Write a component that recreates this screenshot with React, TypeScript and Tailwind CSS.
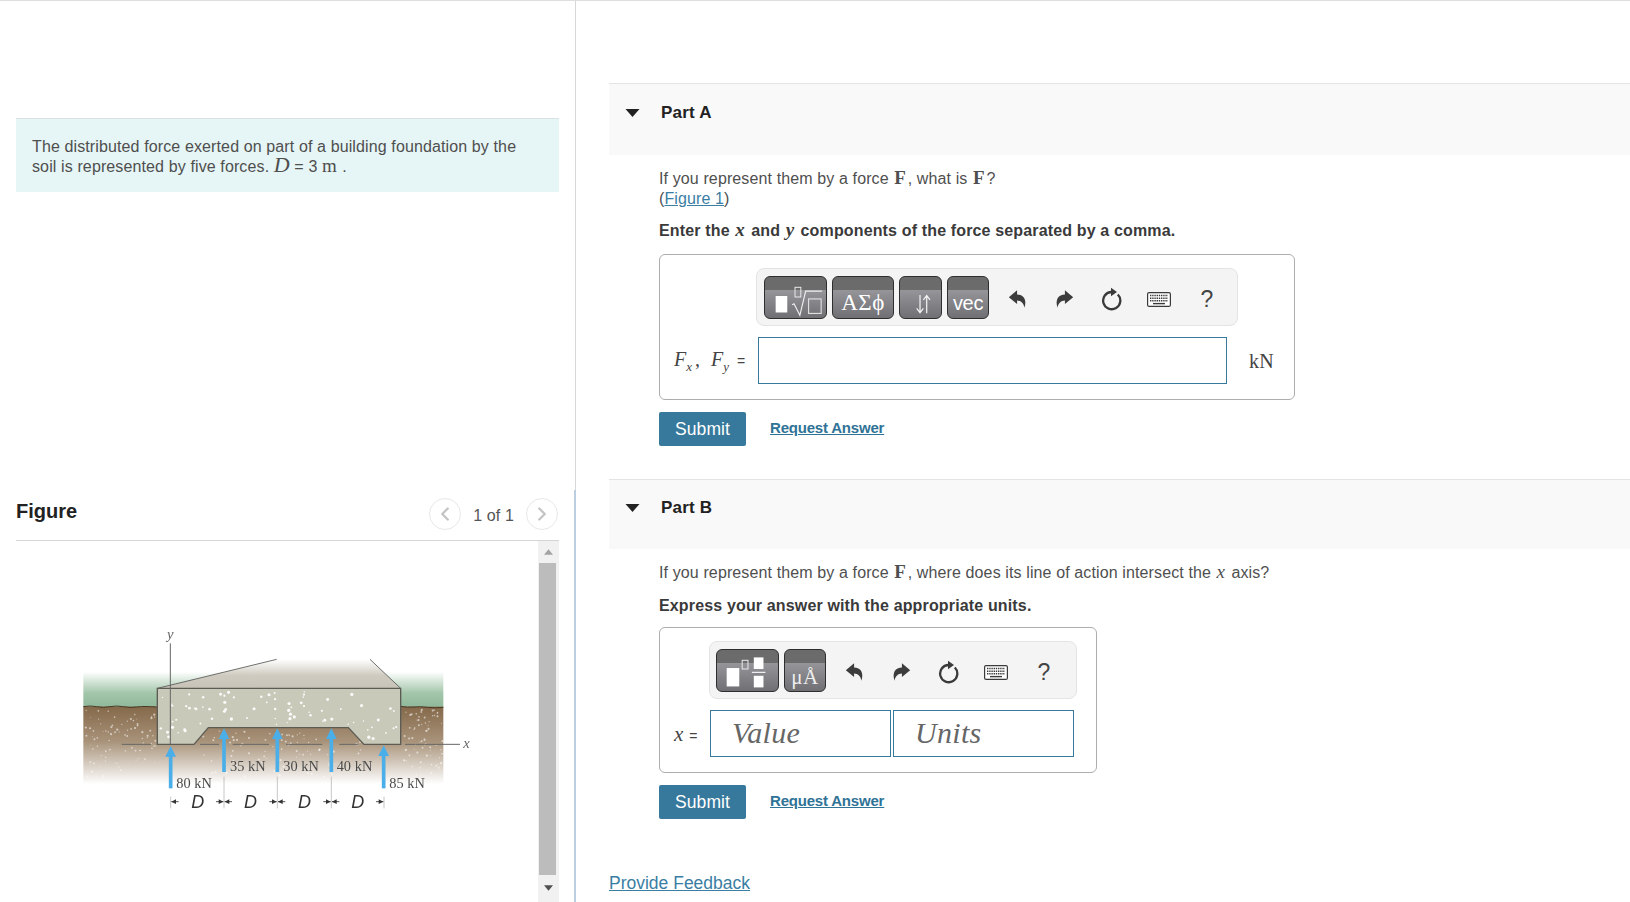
import React from "react";
import { ChevronLeft, ChevronRight } from "lucide-react";

const serif = "font-['Liberation_Serif',serif]";

// speckles for the concrete and the soil in the figure
const speck = (n: number, x0: number, x1: number, y0: number, y1: number, seed: number) =>
  Array.from({ length: n }, (_, i) => {
    const a = Math.sin(i * 12.9898 + seed) * 43758.5453;
    const b = Math.sin(i * 78.233 + seed) * 12543.123;
    const c = Math.sin(i * 37.719 + seed) * 9631.77;
    return {
      x: x0 + (a - Math.floor(a)) * (x1 - x0),
      y: y0 + (b - Math.floor(b)) * (y1 - y0),
      r: 2 + (c - Math.floor(c)) * 3,
    };
  });

const concrete = [
  ...speck(62, 272, 985, 215, 315, 1),
  ...speck(8, 272, 370, 318, 365, 2),
  ...speck(7, 885, 985, 318, 365, 3),
];
const soil = [
  ...speck(80, 45, 258, 270, 470, 4),
  ...speck(70, 1000, 1118, 270, 470, 5),
  ...speck(90, 390, 880, 332, 470, 6),
];

const Arrow = ({ x, tip, end }: { x: number; tip: number; end: number }) => (
  <g fill="#4aaee9">
    <rect x={x - 5.5} y={tip + 20} width={11} height={end - tip - 20} />
    <polygon points={`${x},${tip} ${x + 16},${tip + 32} ${x - 16},${tip + 32}`} />
  </g>
);

const Foundation = () => (
  <svg viewBox="0 0 1260 600" className="w-[420px] h-[200px] blur-[0.7px]">
    <defs>
      <linearGradient id="grass" x1="0" y1="0" x2="0" y2="1">
        <stop offset="0" stopColor="#ffffff" />
        <stop offset="0.6" stopColor="#a3c6aa" />
        <stop offset="1" stopColor="#8fb89a" />
      </linearGradient>
      <linearGradient id="dirt" x1="0" y1="0" x2="0" y2="1">
        <stop offset="0" stopColor="#85694a" />
        <stop offset="0.45" stopColor="#a8937a" />
        <stop offset="1" stopColor="#ffffff" />
      </linearGradient>
      <linearGradient id="slab" x1="0" y1="0" x2="0" y2="1">
        <stop offset="0" stopColor="#ffffff" />
        <stop offset="0.55" stopColor="#cfcbc0" />
        <stop offset="1" stopColor="#c7c3b7" />
      </linearGradient>
    </defs>
    <rect x="40" y="155" width="1080" height="107" fill="url(#grass)" />
    <rect x="40" y="260" width="1080" height="232" fill="url(#dirt)" />
    {soil.map((d, i) => (
      <circle key={i} cx={d.x} cy={d.y} r={d.r * 0.7} fill="#fff" opacity="0.55" />
    ))}
    <path
      d="M40 260 q20 -4 40 0 t40 0 t40 0 t40 1 t60 0 M992 259 q20 4 40 2 t40 1 t48 0"
      fill="none"
      stroke="#4a3a28"
      strokeWidth="3"
    />
    <polygon points="262,205 620,118 900,118 992,205" fill="url(#slab)" />
    <path d="M262 205 L620 118 M900 118 L992 205" stroke="#555" strokeWidth="2.5" fill="none" />
    <polygon
      points="262,205 992,205 992,373 882,373 835,323 415,323 372,373 262,373"
      fill="#c9c9ba"
      stroke="#5c5c54"
      strokeWidth="4"
    />
    {concrete.map((d, i) => (
      <circle key={i} cx={d.x} cy={d.y} r={d.r} fill="#fff" opacity="0.9" />
    ))}
    <path
      d="M155 373H243M390 373H447M488 373H597M648 373H757M808 373H865M1005 373H1170"
      stroke="#666"
      strokeWidth="3"
    />
    <line x1="301" y1="70" x2="301" y2="373" stroke="#666" strokeWidth="3" />
    <g fill="#666" fontFamily="Liberation Serif, serif" fontStyle="italic" fontSize="44">
      <text x="291" y="58">y</text>
      <text x="1180" y="385">x</text>
    </g>
    <path
      d="M462 470V565M622 470V565M784 470V565M302 530V565M942 530V565"
      stroke="#aaa"
      strokeWidth="2"
    />
    <Arrow x={302} tip={378} end={505} />
    <Arrow x={462} tip={325} end={456} />
    <Arrow x={622} tip={325} end={456} />
    <Arrow x={784} tip={325} end={456} />
    <Arrow x={941} tip={376} end={505} />
    <g fill="#4a4a4a" fontFamily="Liberation Serif, serif" fontSize="43">
      <text x="480" y="454">35 kN</text>
      <text x="640" y="454">30 kN</text>
      <text x="800" y="454">40 kN</text>
      <text x="319" y="504">80 kN</text>
      <text x="958" y="503">85 kN</text>
    </g>
    <path
      d="M304 545H326M438 545H460M464 545H486M598 545H620M624 545H646M760 545H782M786 545H808M918 545H940"
      stroke="#333"
      strokeWidth="2.5"
    />
    <g fill="#333">
      <polygon points="304,545 318,538 318,552" />
      <polygon points="460,545 446,538 446,552" />
      <polygon points="464,545 478,538 478,552" />
      <polygon points="620,545 606,538 606,552" />
      <polygon points="624,545 638,538 638,552" />
      <polygon points="782,545 768,538 768,552" />
      <polygon points="786,545 800,538 800,552" />
      <polygon points="940,545 926,538 926,552" />
    </g>
    <g fill="#333" fontFamily="Liberation Sans, sans-serif" fontStyle="italic" fontSize="54">
      <text x="364" y="565">D</text>
      <text x="522" y="565">D</text>
      <text x="684" y="565">D</text>
      <text x="844" y="565">D</text>
    </g>
  </svg>
);

const ToolBtn = ({ w, children }: { w: string; children: React.ReactNode }) => (
  <div
    className={`${w} h-[43px] rounded-[6px] border border-[#2e2e2e] bg-[linear-gradient(#6b6b6b_0,#6b6b6b_31%,#95959a_31%,#6f6f74_100%)] text-white flex items-end justify-center overflow-hidden`}
  >
    {children}
  </div>
);

const Undo = ({ flip }: { flip?: boolean }) => (
  <svg viewBox="0 0 24 24" className={`w-[22px] h-[22px] ${flip ? "-scale-x-100" : ""}`}>
    <path
      d="M2 10 L11 2.5 V7 C18 7 22 12.5 19 21.5 C18.5 16.5 15 13.5 11 13.5 V17.5 Z"
      fill="#3c3c3c"
    />
  </svg>
);

const Reset = () => (
  <svg viewBox="0 0 24 24" className="w-[24px] h-[24px] translate-x-[1px]">
    <path d="M17.8 7.5 A8.6 8.6 0 1 1 11.5 5" fill="none" stroke="#3a3a3a" strokeWidth="2.3" />
    <polygon points="11,0.8 17,5 11,9.2" fill="#3a3a3a" />
  </svg>
);

const Keyboard = () => (
  <svg viewBox="0 0 24 15" className="w-[24px] h-[15px]">
    <rect x="0.6" y="0.6" width="22.8" height="13.8" rx="1.5" fill="#fff" stroke="#3a3a3a" strokeWidth="1.2" />
    <path d="M3 3.6H21M3 6.2H21M3 8.8H21" stroke="#3a3a3a" strokeWidth="1.5" strokeDasharray="1.4 0.8" />
    <path d="M6 11.6H18" stroke="#3a3a3a" strokeWidth="1.4" />
  </svg>
);

const ToolIcons = () => (
  <div className="flex items-center gap-[24px] pt-[4px]">
    <Undo />
    <Undo flip />
    <Reset />
    <Keyboard />
    <span className="w-[24px] text-center text-[23px] leading-none text-[#444]">?</span>
  </div>
);

const Actions = () => (
  <div className="flex items-center">
    <button className="w-[87px] h-[34px] rounded-[2px] bg-[#37799c] text-white text-[17.5px] tracking-[0.1px]">
      Submit
    </button>
    <a className="ml-[24px] mb-[2px] text-[15px] font-bold text-[#2f7396] underline tracking-[-0.2px]">
      Request Answer
    </a>
  </div>
);

const PartHeader = ({ title, h, pt }: { title: string; h: string; pt: string }) => (
  <div className={`${h} ${pt} bg-[#f9f9f9] flex items-start pl-[16px] border-t border-[#e4e4e4]`}>
    <svg viewBox="0 0 14 8" className="w-[15px] h-[8px] mt-[6px]">
      <polygon points="0,0 14,0 7,8" fill="#222" />
    </svg>
    <h3 className="ml-[21px] text-[17px] leading-[20px] font-bold text-[#222] tracking-[0.2px]">{title}</h3>
  </div>
);

const M = ({ children, b }: { children: React.ReactNode; b?: boolean }) => (
  <span className={`${serif} text-[19px] leading-[0] mx-[1px] tracking-[0.8px] ${b ? "font-bold" : "italic"}`}>{children}</span>
);

export default function App() {
  return (
    <div className="w-[1630px] h-[902px] overflow-hidden flex bg-white border-t border-[#dedede] font-['Liberation_Sans',Arial,sans-serif] text-[16px] leading-[20px] tracking-[0.12px] text-[#4f4f4f]">
      {/* left column */}
      <aside className="w-[576px] shrink-0">
        <div className="h-[489px] border-r border-[#d8d8d8] px-[16px] pt-[117px]">
          <div className="h-[74px] bg-[#e6f5f5] border-t border-[#d9e2e2] pl-[16px] pt-[18px]">
            The distributed force exerted on part of a building foundation by the
            <br />
            soil is represented by five forces. <span className={`${serif} italic text-[22px] leading-[0]`}>D</span> = 3{" "}
            <span className={`${serif} text-[19px] leading-[0] tracking-[1px]`}>m</span> .
          </div>
        </div>
        <div className="h-[412px] border-r-2 border-[#bccfe0] pl-[16px] pr-[15px] pt-[2px]">
          <div className="h-[49px] border-b border-[#d5d5d5] flex items-start">
            <h2 className="text-[20px] leading-[24px] font-bold text-[#222] mt-[7px] tracking-normal">Figure</h2>
            <div className="ml-auto flex items-center mt-[6px] pr-[1px]">
              <span className="w-[32px] h-[32px] rounded-full border border-[#e8e8e8] flex items-center justify-center text-[#c4c4c4]">
                <ChevronLeft size={22} strokeWidth={2.5} />
              </span>
              <span className="mx-[12px] text-[#555] mt-[3px]">1 of 1</span>
              <span className="w-[32px] h-[32px] rounded-full border border-[#e8e8e8] flex items-center justify-center text-[#c4c4c4]">
                <ChevronRight size={22} strokeWidth={2.5} />
              </span>
            </div>
          </div>
          <div className="h-[361px] flex">
            <div className="flex-1 pl-[54px] pt-[79px]">
              <Foundation />
            </div>
            <div className="w-[21px] bg-[#f1f1f1] flex flex-col items-center">
              <svg viewBox="0 0 10 6" className="w-[9px] h-[6px] mt-[8px] mb-[8px]">
                <polygon points="5,0 10,6 0,6" fill="#a3a3a3" />
              </svg>
              <div className="w-[17px] h-[312px] bg-[#bcbcbc] mr-[2px]" />
              <svg viewBox="0 0 10 6" className="w-[9px] h-[6px] mt-[10px]">
                <polygon points="0,0 10,0 5,6" fill="#505050" />
              </svg>
            </div>
          </div>
        </div>
      </aside>

      {/* right column */}
      <main className="flex-1 pl-[33px] pt-[82px]">
        <PartHeader title="Part A" h="h-[72px]" pt="pt-[19px]" />
        <div className="pl-[50px]">
          <p className="mt-[14px]">
            If you represent them by a force <M b>F</M>, what is <M b>F</M>?
            <br />
            (<a className="text-[#3a7ea3] underline">Figure 1</a>)
          </p>
          <p className="mt-[12px] font-bold text-[#3a3a3a] tracking-[0.15px]">
            Enter the <M>x</M> and <M>y</M> components of the force separated by a comma.
          </p>
          <div className="mt-[13px] w-[636px] h-[146px] rounded-[6px] border border-[#adadad] pt-[13px]">
            <div className="ml-[96px] w-[482px] h-[58px] rounded-[8px] border border-[#e4e4e4] bg-[#f4f4f4] flex items-center pl-[7px]">
              <div className="flex gap-[5px]">
                <ToolBtn w="w-[63px]">
                  <svg viewBox="0 0 63 43" className="w-[63px] h-[43px]">
                    <rect x="11" y="21" width="12" height="17" fill="#fff" />
                    <rect x="31" y="12" width="6" height="10" fill="none" stroke="#eee" strokeWidth="1" />
                    <path d="M28 30l2-1 6 12 6-25h17" fill="none" stroke="#eee" strokeWidth="1.2" />
                    <rect x="45" y="24" width="13" height="15" fill="none" stroke="#ddd" strokeWidth="1.2" />
                  </svg>
                </ToolBtn>
                <ToolBtn w="w-[62px]">
                  <span className={`${serif} text-[23px] leading-[30px] tracking-[0.4px]`}>ΑΣϕ</span>
                </ToolBtn>
                <ToolBtn w="w-[43px]">
                  <svg viewBox="0 0 43 43" className="w-[43px] h-[43px]">
                    <path
                      d="M21 20V38M17.5 34L21 38.5L24.5 34M28 39V21M24.5 25L28 20.5L31.5 25"
                      fill="none"
                      stroke="#f2f2f2"
                      strokeWidth="1.3"
                    />
                  </svg>
                </ToolBtn>
                <ToolBtn w="w-[42px]">
                  <span className="text-[20px] leading-[30px] tracking-[-0.3px]">vec</span>
                </ToolBtn>
              </div>
              <div className="ml-[18px]">
                <ToolIcons />
              </div>
            </div>
            <div className="mt-[11px] flex items-center">
              <div className={`${serif} w-[98px] pl-[14px] pt-[4px] text-[#444] text-[20px] whitespace-nowrap tracking-normal`}>
                <i>F</i>
                <i className="text-[13px] align-sub">x</i>
                <span className="ml-[3px] mr-[11px]">,</span>
                <i>F</i>
                <i className="text-[13px] align-sub">y</i>
                <span className="font-['Liberation_Sans',sans-serif] text-[14px] ml-[8px]">=</span>
              </div>
              <div className="w-[469px] h-[47px] border border-[#37799c] bg-white" />
              <span className={`${serif} ml-[22px] text-[20px] text-[#444] tracking-[0.3px]`}>kN</span>
            </div>
          </div>
          <div className="mt-[12px]">
            <Actions />
          </div>
        </div>

        <div className="mt-[33px]">
          <PartHeader title="Part B" h="h-[70px]" pt="pt-[18px]" />
        </div>
        <div className="pl-[50px]">
          <p className="mt-[14px]">
            If you represent them by a force <M b>F</M>, where does its line of action intersect the <M>x</M> axis?
          </p>
          <p className="mt-[13px] font-bold text-[#3a3a3a] tracking-[0.15px]">Express your answer with the appropriate units.</p>
          <div className="mt-[11px] w-[438px] h-[146px] rounded-[6px] border border-[#adadad] pt-[13px]">
            <div className="ml-[49px] w-[368px] h-[58px] rounded-[8px] border border-[#e4e4e4] bg-[#f4f4f4] flex items-center pl-[6px]">
              <div className="flex gap-[5px]">
                <ToolBtn w="w-[63px]">
                  <svg viewBox="0 0 63 43" className="w-[63px] h-[43px]">
                    <rect x="10" y="20" width="13" height="19" fill="#fff" />
                    <rect x="26" y="12" width="6" height="9" fill="none" stroke="#eee" strokeWidth="1" />
                    <rect x="38" y="9" width="10" height="12" fill="#fff" />
                    <path d="M36 24.5H50" stroke="#eee" strokeWidth="1.4" />
                    <rect x="38" y="28" width="10" height="12" fill="#fff" />
                  </svg>
                </ToolBtn>
                <ToolBtn w="w-[42px]">
                  <span className={`${serif} text-[21px] leading-[28px] tracking-[0.5px] text-[#eee]`}>μÅ</span>
                </ToolBtn>
              </div>
              <div className="ml-[18px]">
                <ToolIcons />
              </div>
            </div>
            <div className="mt-[11px] flex items-center">
              <div className={`${serif} w-[50px] pl-[14px] pt-[3px] text-[#444] text-[21px] whitespace-nowrap tracking-normal`}>
                <i>x</i>
                <span className="font-['Liberation_Sans',sans-serif] text-[14px] ml-[6px]">=</span>
              </div>
              <div className={`${serif} w-[181px] h-[47px] border border-[#37799c] pl-[21px] text-[30px] leading-[44px] tracking-[0.3px] italic text-[#666]`}>
                Value
              </div>
              <div className={`${serif} ml-[2px] w-[181px] h-[47px] border border-[#37799c] pl-[21px] text-[30px] leading-[44px] tracking-[0.3px] italic text-[#666]`}>
                Units
              </div>
            </div>
          </div>
          <div className="mt-[12px]">
            <Actions />
          </div>
        </div>

        <a className="block mt-[52px] text-[17.5px] leading-[24px] text-[#3a7ea3] underline tracking-normal">Provide Feedback</a>
      </main>
    </div>
  );
}
